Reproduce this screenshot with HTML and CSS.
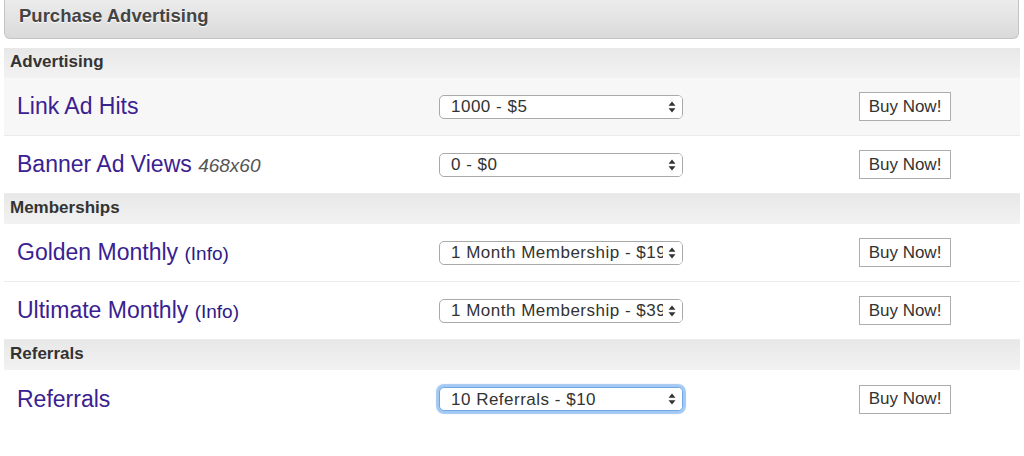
FILE: index.html
```html
<!DOCTYPE html>
<html>
<head>
<meta charset="utf-8">
<link rel="stylesheet" href="styles.css">
</head>
<body>
<div class="page">
  <div class="titlebar">Purchase Advertising</div>
  <div class="table">
    <div class="section">Advertising</div>
    <div class="row alt">
      <div class="name"><a>Link Ad Hits</a></div>
      <div class="pick"><span class="sel"><select><option>1000 - $5</option></select><span class="arr"><svg width="8" height="12" viewBox="0 0 8 12"><path d="M4 0.5 L7.5 4.8 H0.5 Z M4 11.5 L7.5 7.2 H0.5 Z" fill="#333"/></svg></span></span></div>
      <div class="act"><button>Buy Now!</button></div>
    </div>
    <div class="row">
      <div class="name"><a>Banner Ad Views</a> <em class="dim">468x60</em></div>
      <div class="pick"><span class="sel"><select><option>0 - $0</option></select><span class="arr"><svg width="8" height="12" viewBox="0 0 8 12"><path d="M4 0.5 L7.5 4.8 H0.5 Z M4 11.5 L7.5 7.2 H0.5 Z" fill="#333"/></svg></span></span></div>
      <div class="act"><button>Buy Now!</button></div>
    </div>
    <div class="section">Memberships</div>
    <div class="row">
      <div class="name"><a>Golden Monthly</a> <a class="info">(Info)</a></div>
      <div class="pick"><span class="sel"><select><option>1 Month Membership - $19</option></select><span class="arr"><svg width="8" height="12" viewBox="0 0 8 12"><path d="M4 0.5 L7.5 4.8 H0.5 Z M4 11.5 L7.5 7.2 H0.5 Z" fill="#333"/></svg></span></span></div>
      <div class="act"><button>Buy Now!</button></div>
    </div>
    <div class="row">
      <div class="name"><a>Ultimate Monthly</a> <a class="info">(Info)</a></div>
      <div class="pick"><span class="sel"><select><option>1 Month Membership - $39</option></select><span class="arr"><svg width="8" height="12" viewBox="0 0 8 12"><path d="M4 0.5 L7.5 4.8 H0.5 Z M4 11.5 L7.5 7.2 H0.5 Z" fill="#333"/></svg></span></span></div>
      <div class="act"><button>Buy Now!</button></div>
    </div>
    <div class="section">Referrals</div>
    <div class="row last">
      <div class="name"><a>Referrals</a></div>
      <div class="pick"><span class="sel focus"><select><option>10 Referrals - $10</option></select><span class="arr"><svg width="8" height="12" viewBox="0 0 8 12"><path d="M4 0.5 L7.5 4.8 H0.5 Z M4 11.5 L7.5 7.2 H0.5 Z" fill="#333"/></svg></span></span></div>
      <div class="act"><button>Buy Now!</button></div>
    </div>
  </div>
</div>
</body>
</html>
```
FILE: styles.css
```css
html, body {
  margin: 0;
  padding: 0;
  background: #fff;
}
body {
  font-family: "Liberation Sans", Arial, sans-serif;
  color: #333;
}
.page {
  padding: 0 4px;
}
.titlebar {
  height: 39px;
  box-sizing: border-box;
  margin-right: 1px;
  background: linear-gradient(to bottom, #ececec, #dadada);
  border: 1px solid #c4c4c4;
  border-top: none;
  border-radius: 0 0 6px 6px;
  padding: 5px 0 0 14px;
  font-size: 18.5px;
  font-weight: bold;
  color: #444;
  text-shadow: 0 1px 1px #fff;
}
.table {
  margin-top: 9px;
}
.section {
  height: 30px;
  box-sizing: border-box;
  padding: 4px 0 0 6px;
  background: linear-gradient(to bottom, #e8e8e8, #f2f2f2);
  font-size: 17px;
  font-weight: bold;
  color: #333;
}
.row {
  display: grid;
  grid-template-columns: 435px 420px 1fr;
  align-items: center;
  height: 58px;
  box-sizing: border-box;
  border-bottom: 1px solid #ebebeb;
  background: #fff;
}
.row.alt {
  background: #f7f7f7;
}
.row.last {
  border-bottom: none;
}
.name {
  padding-left: 13px;
  font-size: 23px;
  color: #3a2191;
  white-space: nowrap;
}
.name a {
  color: #3a2191;
}
.name .info {
  font-size: 19px;
  color: #2b1b86;
}
.dim {
  font-size: 19px;
  color: #555;
}
.pick {
  display: flex;
}
.sel {
  position: relative;
  display: inline-block;
  width: 244px;
  height: 24px;
  box-sizing: border-box;
  border: 1px solid #a9a9a9;
  border-radius: 5px;
  background: #fff;
  overflow: hidden;
}
.sel.focus {
  border-color: #6ea7e6;
  box-shadow: 0 0 1px 3px #a3c8f2;
}
.sel select {
  -webkit-appearance: none;
  appearance: none;
  border: none;
  outline: none;
  background: transparent;
  width: 100%;
  height: 22px;
  padding: 0 19px 0 11px;
  font-family: "Liberation Sans", Arial, sans-serif;
  font-size: 17px;
  letter-spacing: 0.5px;
  color: #333;
  display: block;
}
.arr {
  position: absolute;
  right: 0;
  top: 0;
  bottom: 0;
  width: 19px;
  background: #fff;
  display: flex;
  align-items: center;
  justify-content: flex-start;
  padding-left: 5px;
  box-sizing: border-box;
}
.arr svg {
  display: block;
}
.act {
  display: flex;
}
button {
  width: 92px;
  height: 29px;
  box-sizing: border-box;
  border: 1px solid #adadad;
  background: #fff;
  border-radius: 0;
  font-family: "Liberation Sans", Arial, sans-serif;
  font-size: 17px;
  color: #333;
  padding: 0;
}
```
